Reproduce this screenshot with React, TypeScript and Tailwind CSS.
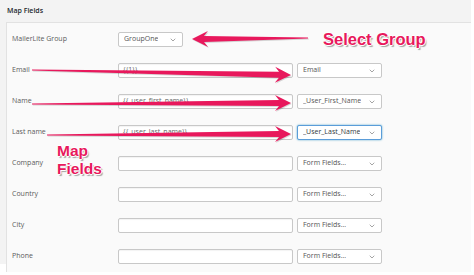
import React from 'react';
import { ChevronDown } from 'lucide-react';

type Pt = [number, number];

// tapered annotation arrow: thin tail, thick shaft near the head
const arrowPath = (tail: Pt, tip: Pt, head = 15, half = 8, w0 = 0.5, w1 = 3) => {
  const dx = tip[0] - tail[0];
  const dy = tip[1] - tail[1];
  const len = Math.hypot(dx, dy);
  const ux = dx / len;
  const uy = dy / len;
  const nx = -uy;
  const ny = ux;
  const bx = tip[0] - ux * head;
  const by = tip[1] - uy * head;
  const p = (x: number, y: number) => `${x.toFixed(1)},${y.toFixed(1)}`;
  return [
    p(tail[0] + nx * w0, tail[1] + ny * w0),
    p(bx + ux * 3 + nx * w1, by + uy * 3 + ny * w1),
    p(bx - ux * 1 + nx * half, by - uy * 1 + ny * half),
    p(tip[0], tip[1]),
    p(bx - ux * 1 - nx * half, by - uy * 1 - ny * half),
    p(bx + ux * 3 - nx * w1, by + uy * 3 - ny * w1),
    p(tail[0] - nx * w0, tail[1] - ny * w0),
  ].join(' ');
};

const arrows: { tail: Pt; tip: Pt }[] = [
  { tail: [308, 38], tip: [192, 39] },
  { tail: [32, 70], tip: [291, 75] },
  { tail: [32, 104], tip: [291, 103] },
  { tail: [47, 135], tip: [291, 134] },
];

const rows = [
  { label: 'Email', value: '{{1}}', option: 'Email' },
  { label: 'Name', value: '{{_user_first_name}}', option: '_User_First_Name' },
  { label: 'Last name', value: '{{_user_last_name}}', option: '_User_Last_Name', focus: true },
  { label: 'Company', value: '', option: 'Form Fields...' },
  { label: 'Country', value: '', option: 'Form Fields...' },
  { label: 'City', value: '', option: 'Form Fields...' },
  { label: 'Phone', value: '', option: 'Form Fields...' },
];

const Select = ({ text, width, focus }: { text: string; width: string; focus?: boolean }) => (
  <div
    className={`flex h-[15px] ${width} items-center justify-between rounded-[2px] border bg-white pl-[5px] pr-[5px] ${
      focus ? 'border-[#5b9dd9] shadow-[0_0_2px_rgba(30,140,190,0.8)] text-[#32373c]' : 'border-[#c8c8c8] text-[#555]'
    }`}
  >
    <span className="truncate">{text}</span>
    <ChevronDown size={8} strokeWidth={1.6} className="shrink-0 text-[#555]" />
  </div>
);

export default function App() {
  return (
    <div className="relative h-[275px] w-[474px] overflow-hidden bg-white font-['Open_Sans',sans-serif] text-[7px]">
      <div className="flex h-[264px] w-[471px] flex-col bg-[#f3f3f3]">
        <div className="flex h-[22px] shrink-0 items-center px-[7px] text-[7px] font-semibold text-[#23282d]">
          Map Fields
        </div>
        <div className="ml-[6px] flex-1 border-l border-t border-[#e2e2e2] bg-[#fafafa] pt-[1px]">
          <div className="flex h-[31px] items-center">
            <div className="w-[111px] pl-[5px] text-[#5a5a5a]">MailerLite Group</div>
            <Select text="GroupOne" width="w-[65px]" />
          </div>
          {rows.map((r) => (
            <div key={r.label} className="flex h-[31px] items-center">
              <div className="w-[111px] pl-[5px] text-[#5a5a5a]">{r.label}</div>
              <div className="flex h-[15px] w-[175px] items-center rounded-[2px] border border-[#c8c8c8] bg-white px-[4px] text-[#666] shadow-[inset_0_1px_1px_rgba(0,0,0,0.05)]">
                {r.value}
              </div>
              <div className="ml-[4px]">
                <Select text={r.option} width="w-[85px]" focus={r.focus} />
              </div>
            </div>
          ))}
        </div>
      </div>

      {/* annotations drawn over the form */}
      <svg className="pointer-events-none absolute inset-0" width="474" height="275" viewBox="0 0 474 275">
        {arrows.map((a, i) => (
          <g key={i}>
            <polygon points={arrowPath([a.tail[0] + 0.8, a.tail[1] + 1], [a.tip[0] + 0.8, a.tip[1] + 1])} fill="rgba(0,0,0,0.15)" />
            <polygon points={arrowPath(a.tail, a.tip)} fill="#e8185c" />
          </g>
        ))}
      </svg>
      <div className="absolute left-[323px] top-[29px] font-['Liberation_Sans',Arial,sans-serif] text-[16.5px] font-bold leading-[20px] text-[#e8185c] [text-shadow:1px_0_0_#fff,-1px_0_0_#fff,0_1px_0_#fff,0_-1px_0_#fff,1.5px_1.5px_1px_rgba(0,0,0,0.35)]">
        Select Group
      </div>
      <div className="absolute left-[57px] top-[142px] font-['Liberation_Sans',Arial,sans-serif] text-[15.5px] font-bold leading-[18px] text-[#e8185c] [text-shadow:1px_0_0_#fff,-1px_0_0_#fff,0_1px_0_#fff,0_-1px_0_#fff,1.5px_1.5px_1px_rgba(0,0,0,0.35)]">
        Map
        <br />
        Fields
      </div>
    </div>
  );
}
